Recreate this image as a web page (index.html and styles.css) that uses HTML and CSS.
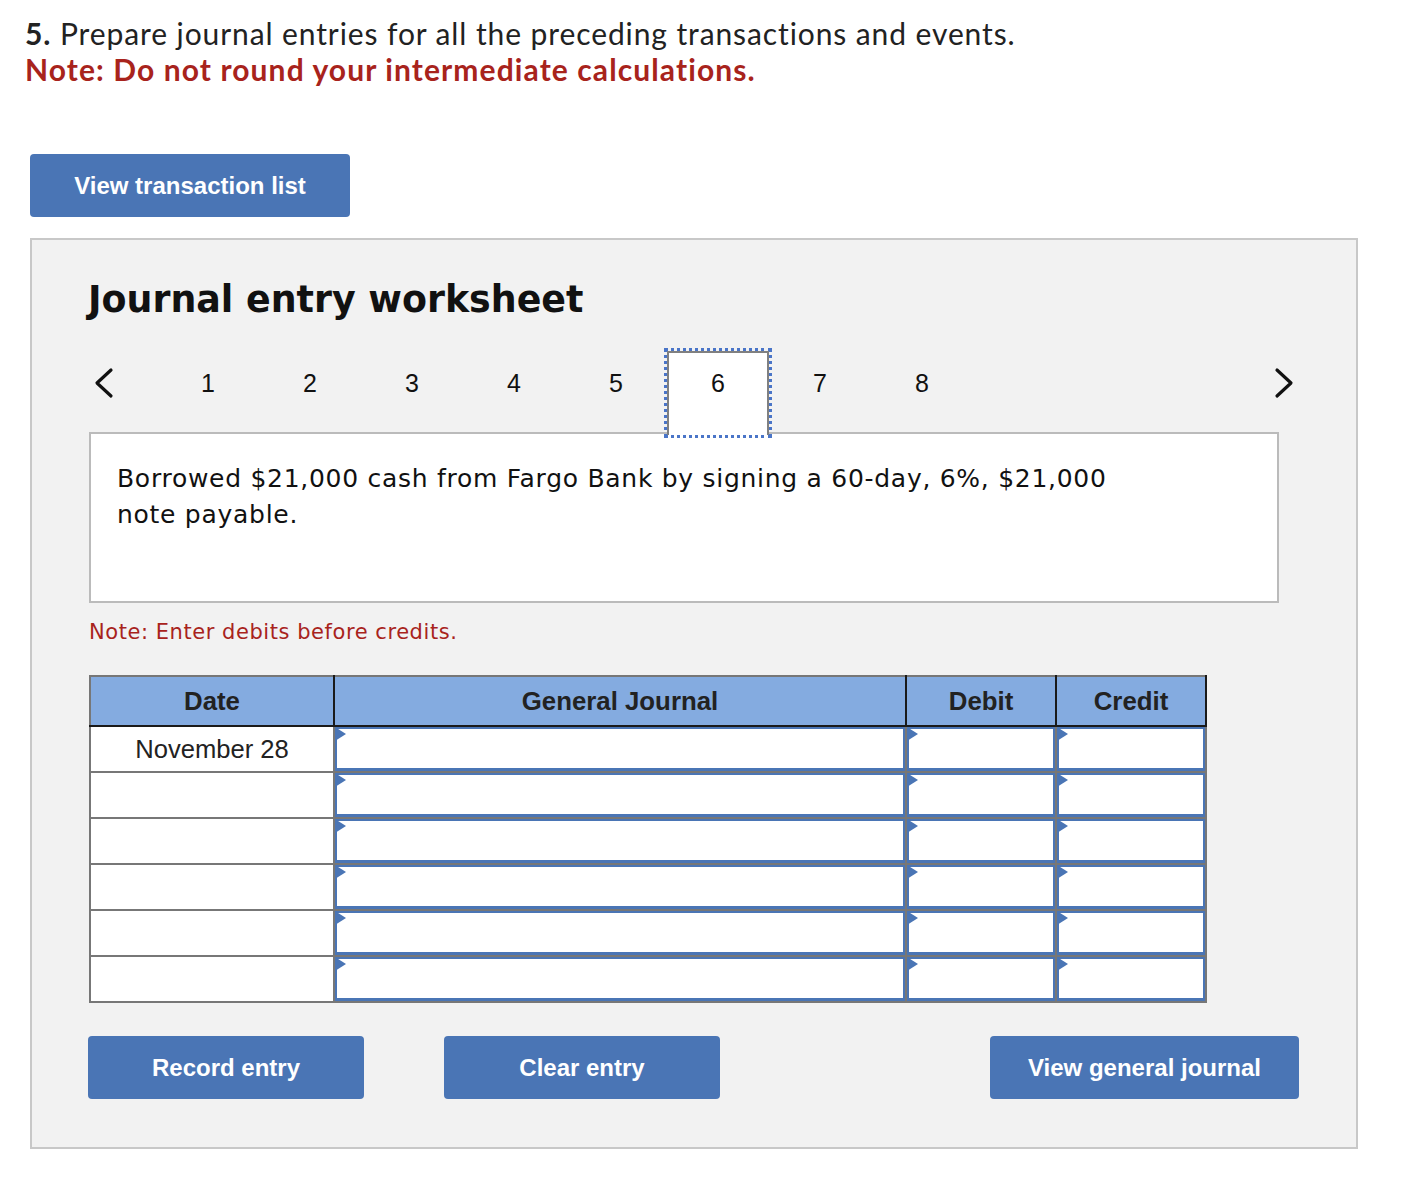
FILE: index.html
```html
<!DOCTYPE html>
<html>
<head>
<meta charset="utf-8">
<link rel="stylesheet" href="styles.css">
</head>
<body>
<div class="page">
  <div class="question">
    <p class="q-line"><b>5.</b> Prepare journal entries for all the preceding transactions and events.</p>
    <p class="q-note">Note: Do not round your intermediate calculations.</p>
  </div>
  <button class="btn btn-list">View transaction list</button>

  <div class="panel">
    <h1 class="title">Journal entry worksheet</h1>
    <div class="nav">
      <div class="arrow arrow-left">
        <svg width="22" height="32" viewBox="0 0 22 32"><polyline points="18,3 4,16 18,29" fill="none" stroke="#111" stroke-width="3.2" stroke-linecap="round" stroke-linejoin="round"/></svg>
      </div>
      <div class="step">1</div>
      <div class="step">2</div>
      <div class="step">3</div>
      <div class="step">4</div>
      <div class="step">5</div>
      <div class="step step-active">6</div>
      <div class="step">7</div>
      <div class="step">8</div>
      <div class="arrow arrow-right">
        <svg width="22" height="32" viewBox="0 0 22 32"><polyline points="4,3 18,16 4,29" fill="none" stroke="#111" stroke-width="3.2" stroke-linecap="round" stroke-linejoin="round"/></svg>
      </div>
    </div>
    <div class="desc">
      <p>Borrowed $21,000 cash from Fargo Bank by signing a 60-day, 6%, $21,000<br>note payable.</p>
    </div>
    <p class="hint">Note: Enter debits before credits.</p>

    <table class="journal">
      <colgroup>
        <col class="c-date"><col class="c-gj"><col class="c-amt"><col class="c-amt">
      </colgroup>
      <thead>
        <tr><th>Date</th><th>General Journal</th><th>Debit</th><th>Credit</th></tr>
      </thead>
      <tbody>
        <tr><td class="date">November 28</td><td class="in"><div class="box"></div></td><td class="in"><div class="box"></div></td><td class="in"><div class="box"></div></td></tr>
        <tr><td class="date"></td><td class="in"><div class="box"></div></td><td class="in"><div class="box"></div></td><td class="in"><div class="box"></div></td></tr>
        <tr><td class="date"></td><td class="in"><div class="box"></div></td><td class="in"><div class="box"></div></td><td class="in"><div class="box"></div></td></tr>
        <tr><td class="date"></td><td class="in"><div class="box"></div></td><td class="in"><div class="box"></div></td><td class="in"><div class="box"></div></td></tr>
        <tr><td class="date"></td><td class="in"><div class="box"></div></td><td class="in"><div class="box"></div></td><td class="in"><div class="box"></div></td></tr>
        <tr><td class="date"></td><td class="in"><div class="box"></div></td><td class="in"><div class="box"></div></td><td class="in"><div class="box"></div></td></tr>
      </tbody>
    </table>

    <div class="actions">
      <button class="btn btn-act">Record entry</button>
      <button class="btn btn-act btn-clear">Clear entry</button>
      <button class="btn btn-act btn-gj">View general journal</button>
    </div>
  </div>
</div>
</body>
</html>
```

FILE: styles.css
```css
html, body {
  margin: 0;
  padding: 0;
  background: #ffffff;
}

.page {
  padding: 15px 0 40px 30px;
  width: 1328px;
}

.question {
  margin-left: -5px;
  font-family: "Lato", "Open Sans", sans-serif;
  font-size: 30px;
  line-height: 36px;
  letter-spacing: 0.9px;
}

.q-line {
  margin: 0;
  color: #222222;
}

.q-line b {
  font-weight: 700;
}

.q-note {
  margin: 0;
  color: #a8231c;
  font-weight: 700;
  letter-spacing: 1.1px;
}

.btn {
  display: block;
  border: none;
  background: #4a75b5;
  color: #ffffff;
  font-family: "Liberation Sans", Arial, sans-serif;
  font-weight: 700;
  font-size: 24px;
  border-radius: 4px;
  height: 63px;
  padding: 0;
  cursor: pointer;
}

.btn-list {
  margin-top: 67px;
  width: 320px;
}

.panel {
  margin-top: 21px;
  border: 2px solid #c8c8c8;
  background: #f2f2f2;
  padding: 38px 56px 48px 56px;
  box-sizing: border-box;
  width: 1328px;
}

.title {
  margin: 0;
  font-family: "DejaVu Sans", Verdana, sans-serif;
  font-weight: 700;
  font-size: 36.4px;
  line-height: 44px;
  color: #111111;
}

.nav {
  margin-top: 29px;
  display: flex;
  align-items: stretch;
  height: 81px;
  margin-right: 5px;
  margin-left: 1px;
}

.arrow {
  display: flex;
  align-items: flex-start;
  padding-top: 16px;
  box-sizing: border-box;
}

.arrow-left {
  width: 68px;
  padding-left: 4px;
}

.arrow-right {
  margin-left: auto;
}

.step {
  width: 102px;
  box-sizing: border-box;
  text-align: center;
  font-family: "Liberation Sans", Arial, sans-serif;
  font-size: 25px;
  line-height: 30px;
  padding-top: 17px;
  color: #111111;
}

.step-active {
  background: #ffffff;
  border: 2px solid #808080;
  border-bottom: none;
  outline: 3px dotted #4a75c8;
  outline-offset: 0px;
  padding-top: 15px;
  height: 84px;
  position: relative;
  z-index: 1;
}

.desc {
  margin-left: 1px;
  width: 1190px;
  height: 171px;
  box-sizing: border-box;
  background: #ffffff;
  border: 2px solid #bbbbbb;
  padding: 27px 26px 0 26px;
}

.desc p {
  margin: 0;
  font-family: "DejaVu Sans", Verdana, sans-serif;
  font-size: 25px;
  line-height: 36px;
  letter-spacing: 0.72px;
  color: #111111;
}

.hint {
  margin: 15px 0 0 1px;
  font-family: "DejaVu Sans", Verdana, sans-serif;
  font-size: 21px;
  line-height: 28px;
  letter-spacing: 0.55px;
  color: #a8231c;
}

.journal {
  margin-top: 29px;
  margin-left: 1px;
  border-collapse: collapse;
  table-layout: fixed;
  width: 1116px;
  border: 2px solid #777777;
}

.c-date { width: 244px; }
.c-gj { width: 572px; }
.c-amt { width: 150px; }

.journal th {
  background: #84abe0;
  height: 48px;
  padding: 0;
  border: 2px solid #777777;
  border-right-color: #1a1a1a;
  border-bottom-color: #1a1a1a;
  font-family: "Liberation Sans", Arial, sans-serif;
  font-weight: 700;
  font-size: 25.8px;
  color: #222222;
  text-align: center;
}

.journal td {
  height: 44px;
  padding: 0;
  border: 2px solid #777777;
  background: #ffffff;
}

.journal td.date {
  text-align: center;
  font-family: "Liberation Sans", Arial, sans-serif;
  font-size: 25.6px;
  color: #222222;
}

.journal td.in {
  position: relative;
}

.box {
  position: absolute;
  left: 0;
  top: 0;
  right: 0;
  bottom: 0;
  border: 2px solid #4a75b5;
  border-bottom-width: 3px;
}

.box::before {
  content: "";
  position: absolute;
  left: -2px;
  top: -2px;
  width: 0;
  height: 0;
  border-top: 7px solid transparent;
  border-bottom: 7px solid transparent;
  border-left: 11px solid #4a75b5;
}

.actions {
  margin-top: 33px;
  display: flex;
  width: 1211px;
}

.btn-act {
  width: 276px;
}

.btn-clear {
  margin-left: 80px;
}

.btn-gj {
  margin-left: auto;
  width: 309px;
}
```
